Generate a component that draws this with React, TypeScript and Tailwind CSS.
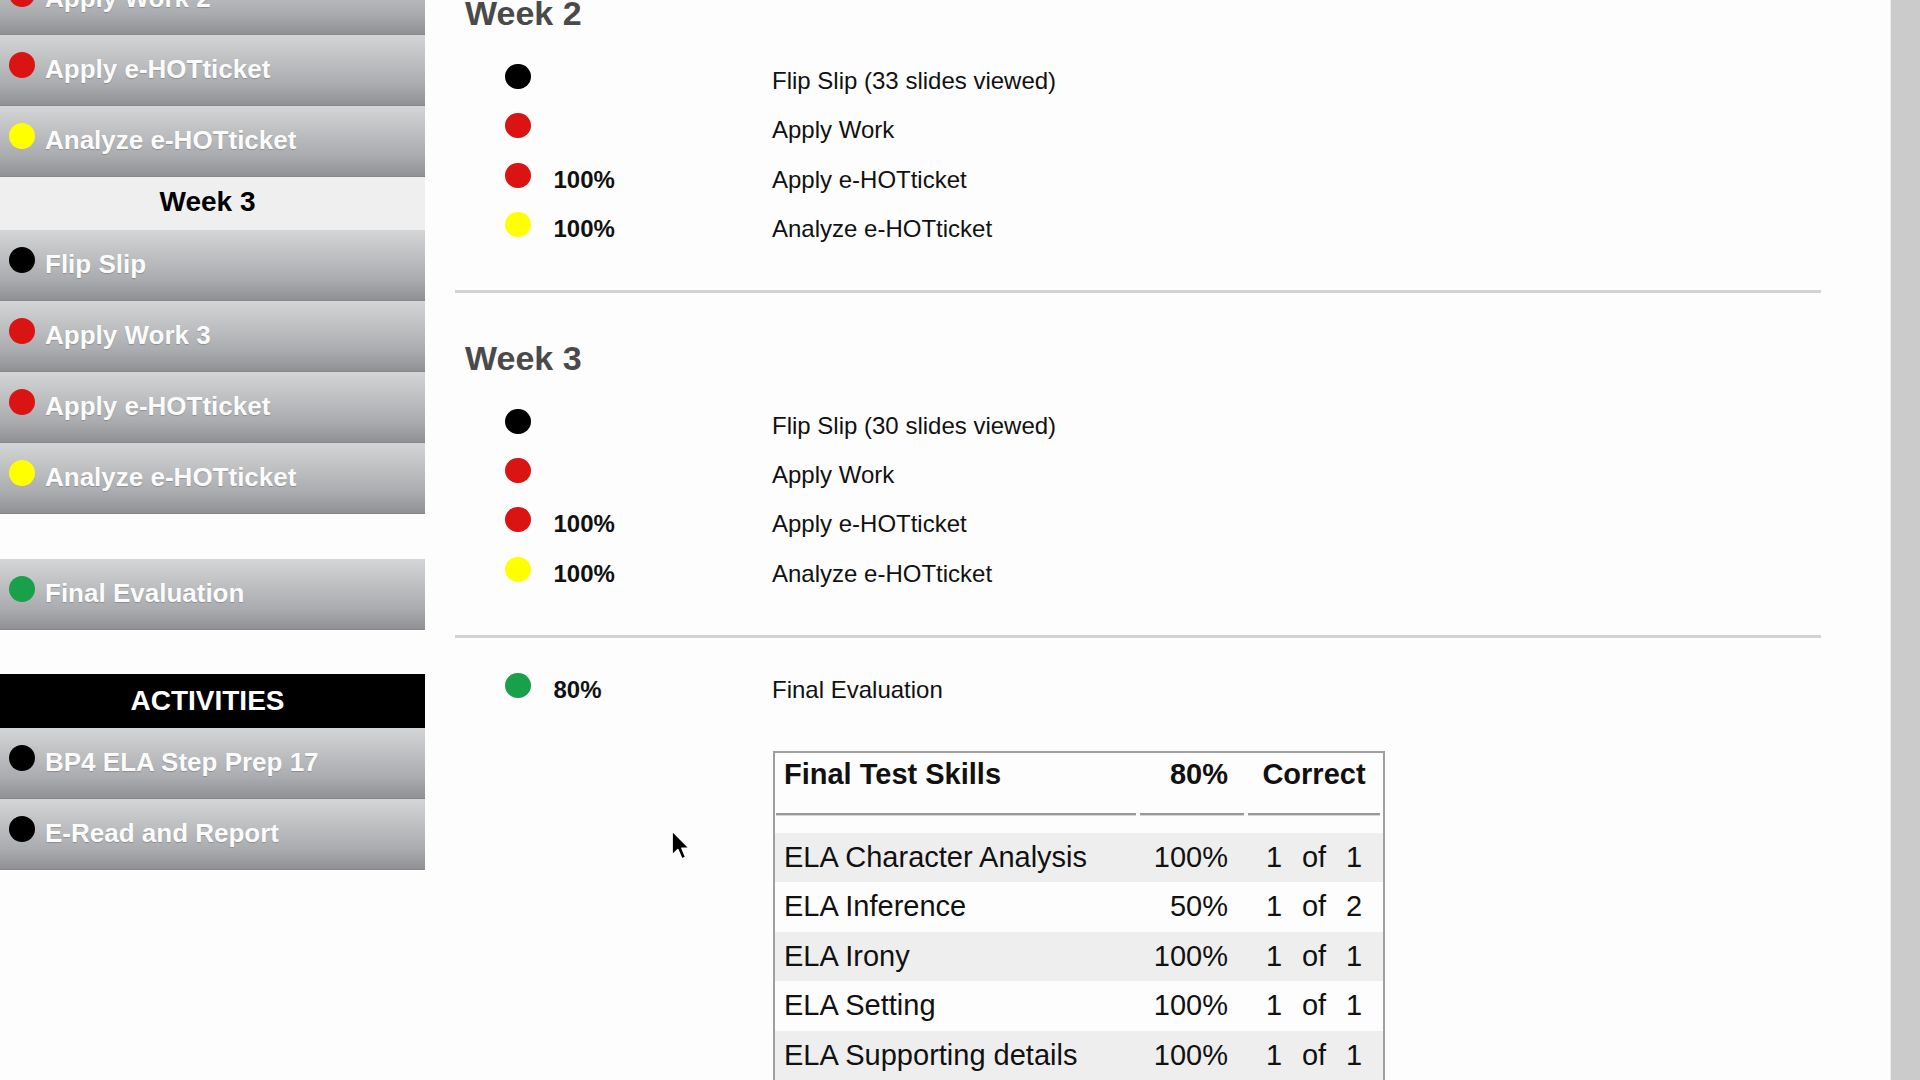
import React from 'react';

type Dot = 'black' | 'red' | 'yellow' | 'green';

const dotClass: Record<Dot, string> = {
  black: 'bg-black',
  red: 'bg-[#da1313]',
  yellow: 'bg-[#ffff00]',
  green: 'bg-[#19a04a]',
};

type SideEntry =
  | { kind: 'item'; dot: Dot; label: string }
  | { kind: 'week'; label: string }
  | { kind: 'dark'; label: string }
  | { kind: 'gap'; h: string };

const sideEntries: SideEntry[] = [
  { kind: 'item', dot: 'red', label: 'Apply Work 2' },
  { kind: 'item', dot: 'red', label: 'Apply e-HOTticket' },
  { kind: 'item', dot: 'yellow', label: 'Analyze e-HOTticket' },
  { kind: 'week', label: 'Week 3' },
  { kind: 'item', dot: 'black', label: 'Flip Slip' },
  { kind: 'item', dot: 'red', label: 'Apply Work 3' },
  { kind: 'item', dot: 'red', label: 'Apply e-HOTticket' },
  { kind: 'item', dot: 'yellow', label: 'Analyze e-HOTticket' },
  { kind: 'gap', h: 'h-[45px]' },
  { kind: 'item', dot: 'green', label: 'Final Evaluation' },
  { kind: 'gap', h: 'h-[44px]' },
  { kind: 'dark', label: 'ACTIVITIES' },
  { kind: 'item', dot: 'black', label: 'BP4 ELA Step Prep 17' },
  { kind: 'item', dot: 'black', label: 'E-Read and Report' },
];

type Task = { dot: Dot; pct: string; label: string };

const weeks: { title: string; tasks: Task[] }[] = [
  {
    title: 'Week 2',
    tasks: [
      { dot: 'black', pct: '', label: 'Flip Slip (33 slides viewed)' },
      { dot: 'red', pct: '', label: 'Apply Work' },
      { dot: 'red', pct: '100%', label: 'Apply e-HOTticket' },
      { dot: 'yellow', pct: '100%', label: 'Analyze e-HOTticket' },
    ],
  },
  {
    title: 'Week 3',
    tasks: [
      { dot: 'black', pct: '', label: 'Flip Slip (30 slides viewed)' },
      { dot: 'red', pct: '', label: 'Apply Work' },
      { dot: 'red', pct: '100%', label: 'Apply e-HOTticket' },
      { dot: 'yellow', pct: '100%', label: 'Analyze e-HOTticket' },
    ],
  },
];

const skills = [
  { name: 'ELA Character Analysis', pct: '100%', got: '1', of: '1' },
  { name: 'ELA Inference', pct: '50%', got: '1', of: '2' },
  { name: 'ELA Irony', pct: '100%', got: '1', of: '1' },
  { name: 'ELA Setting', pct: '100%', got: '1', of: '1' },
  { name: 'ELA Supporting details', pct: '100%', got: '1', of: '1' },
];

const font = "font-['Liberation_Sans',Arial,Helvetica,sans-serif]";

const SideItem: React.FC<{ dot: Dot; label: string; first?: boolean }> = ({ dot, label, first }) => (
  <div
    className={`h-[71px] flex items-start border-b border-[#85878a] bg-[linear-gradient(to_bottom,#d4d5d7_0%,#c6c8ca_22%,#aaacaf_70%,#8f9194_100%)] ${
      first ? '-mt-[36px]' : ''
    }`}
  >
    <span className={`w-[26px] h-[26px] rounded-full ml-[9px] mt-[17px] shrink-0 ${dotClass[dot]}`} />
    <span className="ml-[10px] mt-[21px] text-[26px] leading-[26px] font-bold text-[#fbfbfb] [text-shadow:0_1px_1px_rgba(0,0,0,0.2)] whitespace-nowrap">
      {label}
    </span>
  </div>
);

const Sidebar: React.FC = () => (
  <aside className="w-[425px] shrink-0 flex flex-col overflow-hidden">
    {sideEntries.map((e, i) => {
      if (e.kind === 'item') return <SideItem key={i} dot={e.dot} label={e.label} first={i === 0} />;
      if (e.kind === 'week')
        return (
          <div key={i} className="h-[53px] pr-[10px] bg-[#efefef] text-center text-[28px] leading-[50px] font-bold text-black">
            {e.label}
          </div>
        );
      if (e.kind === 'dark')
        return (
          <div key={i} className="h-[54px] pr-[10px] bg-black text-center text-[28px] leading-[54px] font-bold text-white">
            {e.label}
          </div>
        );
      return <div key={i} className={e.h} />;
    })}
  </aside>
);

const TaskRow: React.FC<{ task: Task }> = ({ task }) => (
  <div className="h-[49.3px] flex items-start text-[24px] leading-[48px] text-[#111]">
    <div className="w-[98.5px] shrink-0">
      <span className={`block w-[26px] h-[25px] rounded-full ml-[49.5px] mt-[7px] ${dotClass[task.dot]}`} />
    </div>
    <div className="w-[218.5px] shrink-0 font-bold">{task.pct}</div>
    <div className="whitespace-nowrap">{task.label}</div>
  </div>
);

const SkillsTable: React.FC = () => (
  <div className="ml-[318px] w-[612px] border-2 border-b-0 border-[#9f9f9f] text-[29px] text-[#111]">
    <div className="grid grid-cols-[360px_104px_132px] gap-x-[4px] px-[1px]">
      <div className="h-[60px] pt-[3px] pl-[8px] font-bold leading-[36px]">Final Test Skills</div>
      <div className="h-[60px] pt-[3px] pr-[16px] font-bold leading-[36px] text-right">80%</div>
      <div className="h-[60px] pt-[3px] font-bold leading-[36px] text-center">Correct</div>
      <div className="h-[3px] border-t-2 border-[#9a9a9a] bg-[#d6d6d6]" />
      <div className="h-[3px] border-t-2 border-[#9a9a9a] bg-[#d6d6d6]" />
      <div className="h-[3px] border-t-2 border-[#9a9a9a] bg-[#d6d6d6]" />
    </div>
    <div className="h-[17px]" />
    {skills.map((s, i) => (
      <div
        key={s.name}
        className={`h-[49.5px] leading-[48px] grid grid-cols-[360px_104px_132px] gap-x-[4px] px-[1px] ${
          i % 2 === 0 ? 'bg-[#eeeeee]' : 'bg-[#fdfdfd]'
        }`}
      >
        <div className="pl-[8px] whitespace-nowrap">{s.name}</div>
        <div className="pr-[16px] text-right">{s.pct}</div>
        <div className="flex pl-[6px]">
          <span className="w-[40px] text-center">{s.got}</span>
          <span className="w-[40px] text-center">of</span>
          <span className="w-[40px] text-center">{s.of}</span>
        </div>
      </div>
    ))}
  </div>
);

const Cursor: React.FC = () => (
  <svg className="absolute left-[246px] top-[830px]" width="20" height="31" viewBox="0 0 18 28">
    <path
      d="M1 1 L1 22.5 L6.2 17.6 L9.8 26 L13.2 24.5 L9.8 16.4 L16.5 16.4 Z"
      fill="#000"
      stroke="#fff"
      strokeWidth="1.3"
      strokeLinejoin="round"
    />
  </svg>
);

const App: React.FC = () => {
  return (
    <div className={`${font} w-[1920px] h-[1080px] overflow-hidden flex bg-[#fdfdfd]`}>
      <Sidebar />

      <main className="flex-1 relative overflow-hidden">
        <div className="ml-[30px] w-[1366px] -mt-[7px]">
          {weeks.map((w) => (
            <section key={w.title}>
              <h2 className="h-[40px] pl-[10px] text-[34px] leading-[40px] font-bold text-[#4a4a4a]">{w.title}</h2>
              <div className="h-[24px]" />
              {w.tasks.map((t, i) => (
                <TaskRow key={i} task={t} />
              ))}
              <div className="h-[35.6px]" />
              <div className="h-[3px] bg-[#d4d4d4]" />
              <div className="h-[45px]" />
            </section>
          ))}
        </div>

        {/* final evaluation sits right under the week 3 rule */}
        <div className="ml-[30px] w-[1366px] -mt-[16.6px]">
          <TaskRow task={{ dot: 'green', pct: '80%', label: 'Final Evaluation' }} />
          <div className="h-[35.5px]" />
          <SkillsTable />
        </div>

        <Cursor />
      </main>

      <div className="w-[30px] shrink-0 bg-[#cbcbcb] border-l border-[#ededed]" />
    </div>
  );
};

export default App;
